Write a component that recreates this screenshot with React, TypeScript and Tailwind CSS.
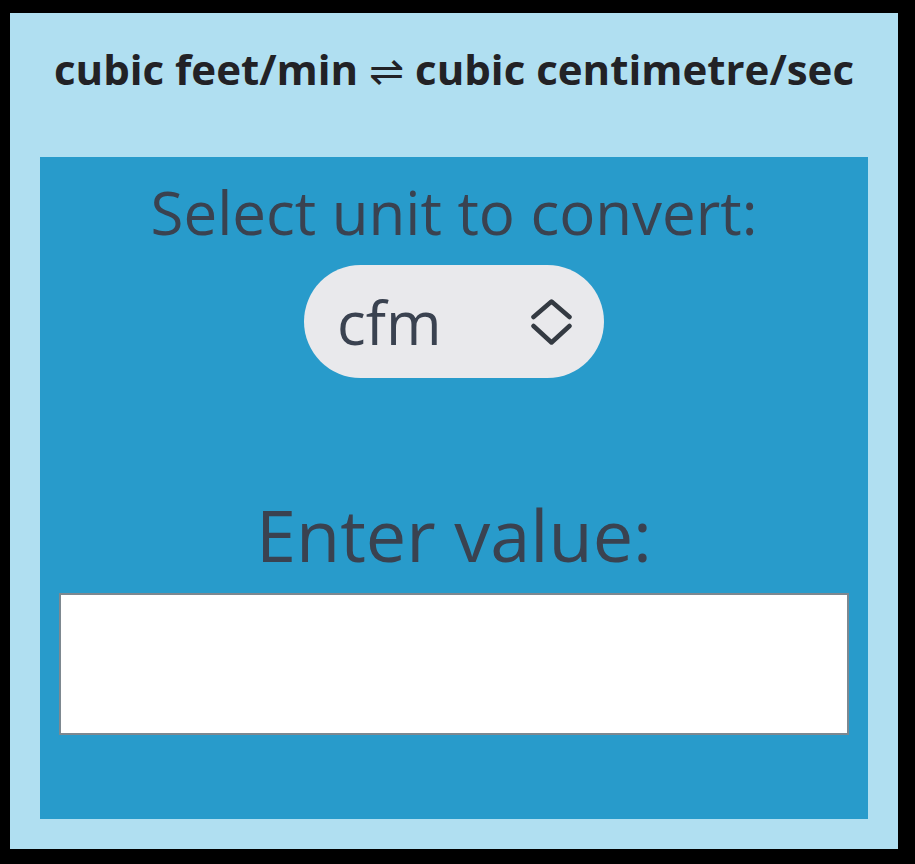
import { useState } from 'react';

const units = ['cfm', 'cm³/s'];

function UpDownIcon() {
  return (
    <svg width="41" height="46" viewBox="0 0 41 46" fill="none" stroke="#343a42" strokeWidth="4.5" strokeLinecap="round" strokeLinejoin="round">
      <polyline points="2.5,18 20.5,2.5 38.5,18" />
      <polyline points="2.5,27 20.5,43.5 38.5,27" />
    </svg>
  );
}

export default function App() {
  const [unit, setUnit] = useState('cfm');
  const [value, setValue] = useState('');

  return (
    <div className="h-[864px] w-[915px] bg-black pt-[13px] pl-[10px] pr-[17px] pb-[15px] font-['Open_Sans',sans-serif]">
      <div className="flex h-full flex-col bg-[#b0dff1] px-[30px] pb-[30px]">
        <h1 className="h-[144px] pt-[35px] text-center text-[42px] leading-none font-bold text-[#222226]">
          cubic feet/min{' '}
          <span className="font-['DejaVu_Sans_ExtraLight','DejaVu_Sans',sans-serif] font-extralight">⇌</span>{' '}
          cubic centimetre/sec
        </h1>
        <div className="flex flex-1 flex-col items-center bg-[#289bcb] px-[19px]">
          <p className="mt-[25px] text-[60px] leading-none text-[#3a4250]">Select unit to convert:</p>
          <div className="relative mt-[23px] h-[113px] w-[300px]">
            <select
              value={unit}
              onChange={(e) => setUnit(e.target.value)}
              className="h-full w-full appearance-none rounded-full bg-[#e9e9ec] pl-[33px] text-[60px] text-[#3a4250] outline-none"
            >
              {units.map((u) => (
                <option key={u} value={u}>{u}</option>
              ))}
            </select>
            <span className="pointer-events-none absolute top-[34px] right-[32px]">
              <UpDownIcon />
            </span>
          </div>
          <p className="mt-[120px] text-[72px] leading-none text-[#3a4250]">Enter value:</p>
          <input
            type="text"
            value={value}
            onChange={(e) => setValue(e.target.value)}
            className="mt-[23px] h-[142px] w-full border-2 border-[#7d8890] bg-white px-4 text-[48px] outline-none"
          />
        </div>
      </div>
    </div>
  );
}
